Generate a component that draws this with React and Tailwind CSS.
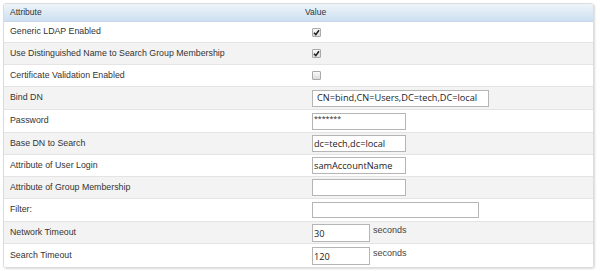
import React from "react";

const rows = [
  { label: "Generic LDAP Enabled", h: "h-[21px]", kind: "check", checked: true },
  { label: "Use Distinguished Name to Search Group Membership", h: "h-[22px]", kind: "check", checked: true },
  { label: "Certificate Validation Enabled", h: "h-[22px]", kind: "check", checked: false },
  { label: "Bind DN", h: "h-[23px]", kind: "bind", value: "CN=bind,CN=Users,DC=tech,DC=local" },
  { label: "Password", h: "h-[23px]", kind: "input", value: "*******", small: true },
  { label: "Base DN to Search", h: "h-[22px]", kind: "input", value: "dc=tech,dc=local" },
  { label: "Attribute of User Login", h: "h-[22px]", kind: "input", value: "samAccountName" },
  { label: "Attribute of Group Membership", h: "h-[22px]", kind: "input", value: "" },
  { label: "Filter:", h: "h-[23px]", kind: "filter", value: "" },
  { label: "Network Timeout", h: "h-[22px]", kind: "timeout", value: "30" },
  { label: "Search Timeout", h: "h-[23px]", kind: "timeout", value: "120" },
];

function Check({ checked }) {
  return (
    <span className="w-[9px] h-[9px] border border-[#a9a9a9] rounded-[1px] bg-gradient-to-b from-[#fbfbfb] to-[#dcdcdc] flex items-center justify-center">
      {checked && (
        <svg width="7" height="7" viewBox="0 0 7 7">
          <path d="M1 3.8 L2.8 5.6 L6 1.2" fill="none" stroke="#222" strokeWidth="1.6" />
        </svg>
      )}
    </span>
  );
}

function Value({ row }) {
  if (row.kind === "check") return <Check checked={row.checked} />;
  if (row.kind === "bind")
    return (
      <div className="w-[177px] h-[17px] border border-[#b5b5b5] bg-white flex items-center px-[4px] text-[9.2px] text-[#222] font-['Open_Sans',sans-serif] whitespace-nowrap">
        {row.value}
      </div>
    );
  if (row.kind === "filter")
    return <div className="w-[167px] h-[16px] border border-[#b5b5b5] bg-white" />;
  if (row.kind === "timeout")
    return (
      <div className="flex items-start gap-[2px] h-[18px]">
        <div className="w-[58px] h-[18px] border border-[#b5b5b5] bg-white flex items-center px-[1px] pt-[2px] text-[9.2px] text-[#222] font-['Open_Sans',sans-serif]">
          {row.value}
        </div>
        <span className="text-[9px] text-[#444] font-['Liberation_Sans',Arial,sans-serif] pl-[1px] leading-[12px]">seconds</span>
      </div>
    );
  return (
    <div
      className={
        "w-[94px] h-[17px] border border-[#b5b5b5] bg-white flex px-[1px] text-[#222] font-['Open_Sans',sans-serif] whitespace-nowrap " +
        (row.small ? "items-start text-[7px] leading-[10px]" : "items-center text-[9.2px]")
      }
    >
      {row.value}
    </div>
  );
}

export default function App() {
  return (
    <div className="w-[600px] h-[271px] bg-white pt-[3px] pl-[3px] font-['Liberation_Sans',Arial,sans-serif]">
      <div className="w-[591px] border border-[#dcdcdc] rounded-[3px] shadow-[1px_1px_2px_rgba(0,0,0,0.15)] overflow-hidden">
        <div className="flex h-[18px] bg-gradient-to-b from-[#eef4fa] to-[#cde0f1] border-b border-[#c9d8e6] text-[8.5px] text-[#333]">
          <div className="w-[299px] pl-[6px] flex items-center">Attribute</div>
          <div className="flex-1 pl-[2px] flex items-center">Value</div>
        </div>
        {rows.map((row, i) => (
          <div
            key={row.label}
            className={
              "flex border-b last:border-b-0 border-[#e4e4e4] " +
              row.h +
              " " +
              (i % 2 === 1 ? "bg-[#f3f3f3]" : "bg-white")
            }
          >
            <div className="w-[299px] pl-[6px] flex items-center text-[8.8px] text-[#333]">{row.label}</div>
            <div className="flex-1 pl-[9px] flex items-center">
              <Value row={row} />
            </div>
          </div>
        ))}
      </div>
    </div>
  );
}
